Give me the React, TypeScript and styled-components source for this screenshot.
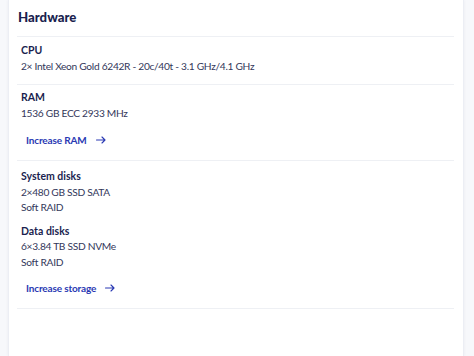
import React from "react";
import styled, { createGlobalStyle } from "styled-components";

const Global = createGlobalStyle`
  html, body { margin: 0; padding: 0; }
  body {
    background: #f7f8fb;
    font-family: Lato, "Noto Sans", sans-serif;
    -webkit-font-smoothing: antialiased;
  }
`;

const Card = styled.section`
  margin: 0 10px 0 8px;
  height: 356px;
  background: #ffffff;
  border-left: 1px solid #eceef4;
  border-right: 1px solid #eceef4;
  box-shadow: 0 0 3px rgba(30, 40, 90, 0.06);
  padding: 0 9px 0 8px;
  box-sizing: border-box;
`;

const Title = styled.h2`
  margin: 0;
  padding: 7px 0 9px 1px;
  font-size: 13.2px;
  line-height: 20px;
  font-weight: 900;
  color: #1b1f4f;
`;

const Section = styled.div<{ $pt?: number; $pb?: number }>`
  border-top: 1px solid #eef0f4;
  padding: ${(p) => p.$pt ?? 6}px 0 ${(p) => p.$pb ?? 10}px 4px;
  display: flex;
  flex-direction: column;
`;

const Group = styled.div<{ $mt?: number }>`
  margin-top: ${(p) => p.$mt ?? 0}px;
`;

const Label = styled.div`
  font-size: 10.5px;
  line-height: 15.5px;
  font-weight: 700;
  color: #1b1f4f;
`;

const Value = styled.div`
  font-size: 10.2px;
  line-height: 15.5px;
  letter-spacing: -0.3px;
  color: #33375a;
`;

const Link = styled.a<{ $mt?: number }>`
  margin-top: ${(p) => p.$mt ?? 10}px;
  margin-left: 5px;
  display: inline-flex;
  align-items: center;
  gap: 9px;
  font-size: 10px;
  line-height: 16px;
  font-weight: 700;
  letter-spacing: -0.15px;
  color: #2a39b3;
  text-decoration: none;
  align-self: flex-start;
`;

const Arrow = () => (
  <svg width="10" height="8" viewBox="0 0 10 8" fill="none">
    <path d="M0.5 4h8.5M6 1l3 3-3 3" stroke="#2a39b3" strokeWidth="1.1" strokeLinecap="round" strokeLinejoin="round" />
  </svg>
);

export default function App() {
  return (
    <>
      <Global />
      <Card>
        <Title>Hardware</Title>
        <Section>
          <Label>CPU</Label>
          <Value>2× Intel Xeon Gold 6242R - 20c/40t - 3.1 GHz/4.1 GHz</Value>
        </Section>
        <Section $pt={5} $pb={12}>
          <Label>RAM</Label>
          <Value>1536 GB ECC 2933 MHz</Value>
          <Link href="#" $mt={11}>
            Increase RAM <Arrow />
          </Link>
        </Section>
        <Section $pt={8} $pb={12}>
          <Group>
            <Label>System disks</Label>
            <Value>2×480 GB SSD SATA</Value>
            <Value>Soft RAID</Value>
          </Group>
          <Group $mt={8}>
            <Label>Data disks</Label>
            <Value>6×3.84 TB SSD NVMe</Value>
            <Value>Soft RAID</Value>
          </Group>
          <Link href="#" $mt={10}>
            Increase storage <Arrow />
          </Link>
        </Section>
        <Section $pt={0} $pb={0} />
      </Card>
    </>
  );
}
